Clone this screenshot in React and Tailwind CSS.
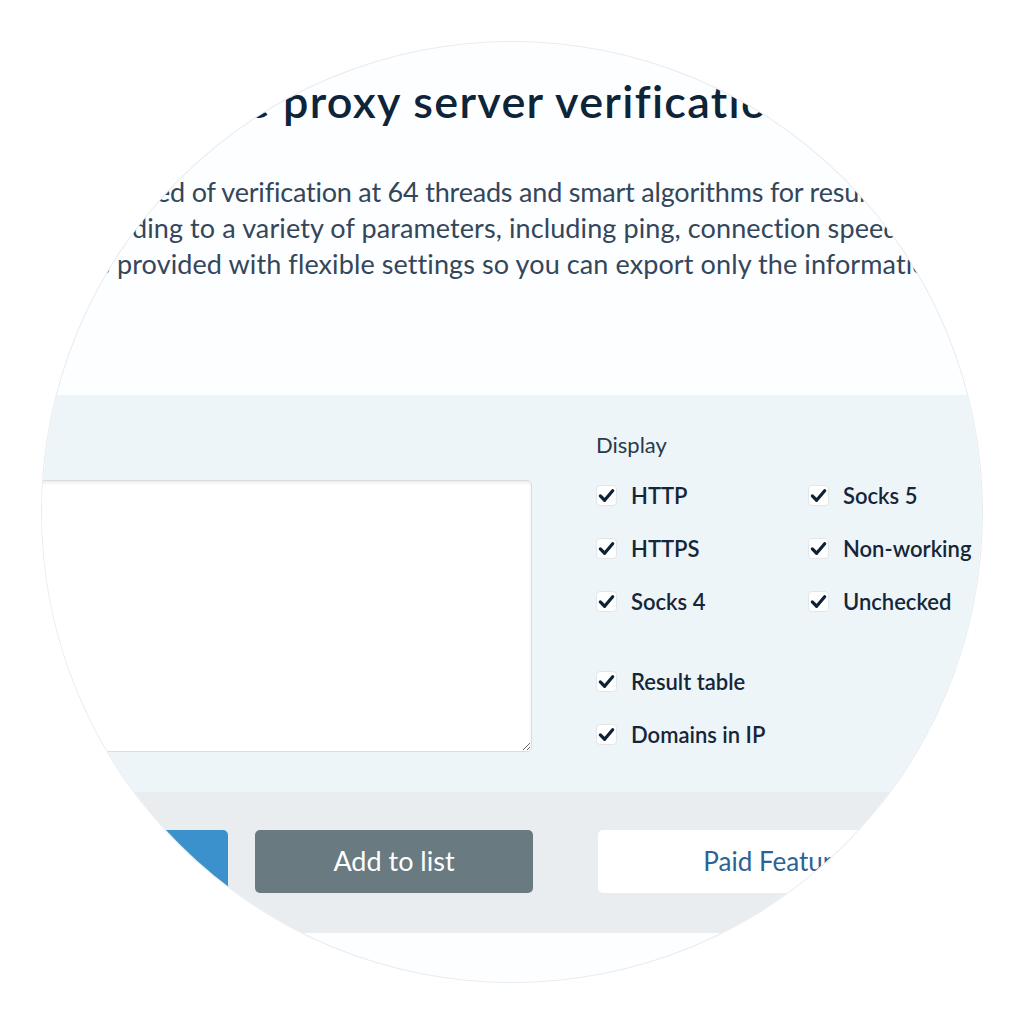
const displayOptions = [
  ['HTTP', 'Socks 5'],
  ['HTTPS', 'Non-working'],
  ['Socks 4', 'Unchecked'],
];

const extraOptions = ['Result table', 'Domains in IP'];

const introLines = [
  { cut: 156, head: 'High spe', tail: 'ed of verification at 64 threads and smart algorithms for result sorting', className: 'tracking-[-0.2px]' },
  { cut: 132, head: 'accor', tail: 'ding to a variety of parameters, including ping, connection speed and' },
  { cut: 117, head: 'country. The checker is\u00a0', tail: 'provided with flexible settings so you can export only the information' },
];

const Checkbox = ({ label }) => (
  <label className="flex items-center gap-[14px] h-[53px]">
    <span className="w-[21px] h-[21px] rounded-[4px] bg-white border border-[#e1e6ea] flex items-center justify-center">
      <svg viewBox="0 0 20 20" className="w-[19px] h-[19px]">
        <path d="M3.5 10.5 L8 15 L16.5 5" fill="none" stroke="#0f2233" strokeWidth="3.4" strokeLinecap="round" strokeLinejoin="round" />
      </svg>
    </span>
    <span className="text-[22px] font-semibold text-[#142638]">{label}</span>
  </label>
);

// prefix is pushed to the left of the cut line so the visible part lands in place
const SplitLine = ({ cut, head, tail, className = '' }) => (
  <div className={`flex whitespace-nowrap ${className}`}>
    <span className="shrink-0 flex justify-end" style={{ width: cut }}>{head}</span>
    <span>{tail}</span>
  </div>
);

export default function App() {
  return (
    <div className="w-[1024px] h-[1024px] bg-white flex items-center justify-center font-['Lato',sans-serif]">
      <div className="w-[940px] h-[940px] rounded-full overflow-hidden ring-1 ring-[#e8ebee] bg-[#fdfeff]">
        <div className="w-[1024px] -ml-[42px] -mt-[42px]">
          <section className="h-[395px] pt-[74px]">
            <SplitLine
              cut={283}
              head={'Free\u00a0'}
              tail="proxy server verification"
              className="text-[45px] leading-[54px] tracking-[1.3px] font-semibold text-[#0e2439]"
            />
            <div className="mt-[46px] text-[27px] leading-[36px] tracking-[0.1px] text-[#34465a]">
              {introLines.map((l) => (
                <SplitLine key={l.cut} {...l} />
              ))}
            </div>
          </section>

          <section className="h-[397px] bg-[#eef5f9] flex">
            <textarea className="mt-[85px] w-[532px] h-[272px] bg-white border border-[#d9dde0] rounded-[5px] shadow-[inset_0_2px_3px_rgba(0,0,0,0.07)] outline-none" />
            <div className="ml-[64px] pt-[38px]">
              <div className="text-[22px] leading-[24px] text-[#2a3a4b]">Display</div>
              <div className="mt-[12px] grid grid-cols-[212px_1fr]">
                {displayOptions.map(([a, b]) => (
                  <div key={a} className="contents">
                    <Checkbox label={a} />
                    <Checkbox label={b} />
                  </div>
                ))}
              </div>
              <div className="mt-[27px]">
                {extraOptions.map((o) => (
                  <Checkbox key={o} label={o} />
                ))}
              </div>
            </div>
          </section>

          <section className="h-[141px] bg-[#e9edf0] flex items-start pt-[38px]">
            <button className="w-[228px] h-[63px] rounded-[5px] bg-[#3a91cb] text-white text-[26px]">Check</button>
            <button className="ml-[27px] w-[278px] h-[63px] rounded-[5px] bg-[#697a80] text-white text-[27px]">Add to list</button>
            <button className="ml-[65px] w-[364px] h-[63px] rounded-[5px] bg-white text-[#2b6394] text-[26px]">Paid Features</button>
          </section>
        </div>
      </div>
    </div>
  );
}
